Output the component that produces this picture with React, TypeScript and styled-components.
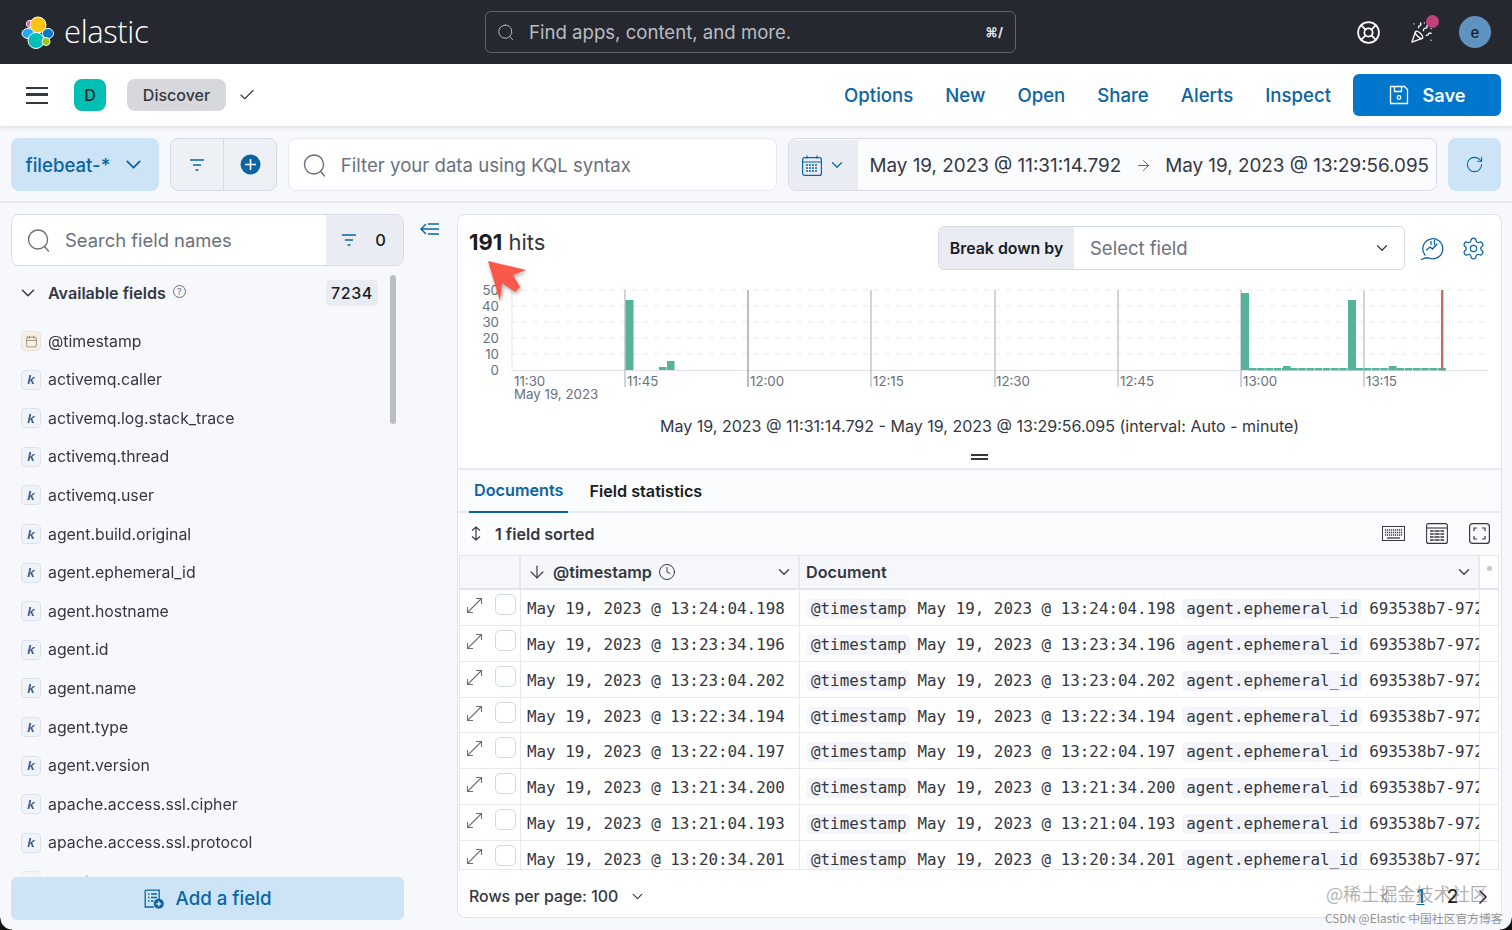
import React from 'react';
import styled, { createGlobalStyle } from 'styled-components';
import { LifeBuoy, PartyPopper, ChevronDown, ArrowRight, ArrowDown, Clock, Settings, RotateCw, Calendar, ChevronLeft, ChevronRight, Check } from 'lucide-react';

const Global = createGlobalStyle`
  html, body { margin: 0; padding: 0; background: #f6f8fc; overflow: hidden; }
  * { box-sizing: border-box; }
  body { font-family: Inter, "Noto Sans", sans-serif; color: #343741; }
`;

const Page = styled.div`
  position: relative; width: 1512px; height: 930px; overflow: hidden;
  display: flex; flex-direction: column; background: #f6f8fc;
`;
const TopBar = styled.header`
  height: 64px; flex: none; background: #25282f; display: flex; align-items: center; padding: 0 21px 0 21px; position: relative;
`;
const Brand = styled.div`
  display: flex; align-items: center; gap: 10px; width: 464px;
  font-family: "Open Sans", sans-serif; font-weight: 300; font-size: 31px; letter-spacing: -0.4px; color: #fff;
  span { margin-top: -3px; }
`;
const GlobalSearch = styled.div`
  width: 531px; height: 42px; border: 1px solid #60646c; border-radius: 6px; display: flex; align-items: center;
  padding: 0 12px 0 11px; gap: 14px; color: #b9bcc2; font-size: 18.6px;
`;
const Shortcut = styled.span` margin-left: auto; font-size: 13px; font-weight: 700; color: #e3e5e8; `;
const TopRight = styled.div` margin-left: auto; display: flex; align-items: center; color: #fff; gap: 29px; `;
const Notified = styled.span`
  position: relative; display: flex;
  &::after { content: ""; position: absolute; width: 13px; height: 13px; border-radius: 50%; background: #c0407c; top: -6px; right: -6px; }
`;
const Avatar = styled.div`
  width: 32px; height: 32px; border-radius: 50%; background: #6092c0; color: #1a1c21; font-size: 15px; font-weight: 500;
  display: flex; align-items: center; justify-content: center; margin-left: -3px;
`;

const SubBar = styled.div`
  height: 62px; flex: none; background: #fff; display: flex; align-items: center; padding: 0 11px 0 26px;
  box-shadow: 0 1px 5px rgba(60,70,90,.18); position: relative; z-index: 2;
`;
const Burger = styled.div`
  width: 22px; height: 17px; border-top: 2.5px solid #343741; border-bottom: 2.5px solid #343741; position: relative; margin-right: 26px;
  &::after { content: ""; position: absolute; left: 0; right: 0; top: 4.7px; height: 2.5px; background: #343741; }
`;
const AppBadge = styled.div`
  width: 32px; height: 32px; border-radius: 8px; background: #00bfb3; color: #1a1c21; font-size: 16px; font-weight: 500;
  display: flex; align-items: center; justify-content: center; margin-right: 21px;
`;
const Crumb = styled.div`
  width: 99px; height: 32px; border-radius: 8px; background: #d6d8db; color: #343741; font-size: 16px; font-weight: 500;
  display: flex; align-items: center; justify-content: center; margin-right: 12px;
`;
const NavLinks = styled.nav` margin-left: auto; display: flex; align-items: center; gap: 32px; color: #0b64a4; font-size: 18.6px; font-weight: 500; `;
const SaveButton = styled.button`
  width: 148px; height: 42px; border: 0; border-radius: 6px; background: #0077cc; color: #fff; font: 600 18.2px Inter, sans-serif;
  display: flex; align-items: center; justify-content: center; gap: 13px; margin-left: 22px; padding: 0 0 0 1px;
`;

const FilterBar = styled.div`
  height: 77px; flex: none; display: flex; gap: 11px; padding: 12px 11px 10px; border-bottom: 2px solid #e6e9f0;
`;
const DataView = styled.div`
  width: 148px; border-radius: 8px; background: #cce4f5; color: #0b64a4; font-size: 18.6px; font-weight: 500;
  display: flex; align-items: center; justify-content: center; gap: 11px; padding-left: 2px;
`;
const FilterGroup = styled.div`
  width: 107px; display: grid; grid-template-columns: 1fr 1fr; border: 1px solid #d6dce6; border-radius: 8px; background: #edf0f5; overflow: hidden;
`;
const GroupCell = styled.div`
  display: flex; align-items: center; justify-content: center;
  & + & { border-left: 1px solid #d6dce6; }
`;
const KqlInput = styled.div`
  width: 490px; background: #fff; border: 1px solid #e6e9f0; border-radius: 8px; display: flex; align-items: center;
  padding-left: 13px; gap: 13px; font-size: 18.6px; color: #6a717d;
`;
const DateBox = styled.div`
  width: 649px; background: #fbfcfe; border: 1px solid #d8dde7; border-radius: 8px; display: flex; align-items: center; overflow: hidden;
  font-size: 18.85px; color: #343741; white-space: nowrap; padding-top: 1px;
`;
const DateIcon = styled.div`
  width: 69px; height: 100%; flex: none; background: #e9edf3; display: flex; align-items: center; justify-content: center; gap: 6px; color: #0b64a4;
`;
const DateText = styled.span` margin-left: 11px; `;
const DateArrow = styled.span` display: flex; margin: 0 13px 0 14px; color: #343741; `;
const RefreshButton = styled.div`
  width: 53px; border-radius: 8px; background: #cce4f5; color: #0b64a4; display: flex; align-items: center; justify-content: center;
`;

const Main = styled.div` flex: 1; display: flex; min-height: 0; `;
const Sidebar = styled.aside`
  width: 393px; margin-left: 11px; padding-top: 11px; display: flex; flex-direction: column; position: relative; height: 717px;
`;
const FieldSearch = styled.div`
  height: 52px; flex: none; border: 1px solid #d6dce6; border-radius: 8px; background: #fff; display: flex; align-items: center; overflow: hidden;
  font-size: 18.4px; color: #6a717d;
`;
const FieldSearchInput = styled.div` flex: 1; display: flex; align-items: center; gap: 13px; padding-left: 14px; `;
const FieldFilter = styled.div`
  width: 77px; height: 100%; background: #e9edf3; display: flex; align-items: center; justify-content: space-between; padding: 0 17px 0 15px;
  color: #1a1c21; font-size: 16.5px; font-weight: 500;
`;
const AvailableRow = styled.div`
  height: 54px; flex: none; display: flex; align-items: center; padding-left: 6px; color: #343741; font-size: 16.1px; font-weight: 600;
`;
const AvailableLabel = styled.span` margin-left: 9px; `;
const HelpIcon = styled.span`
  width: 13px; height: 13px; border: 1px solid #69707d; border-radius: 50%; color: #69707d; font-size: 9px; font-weight: 400;
  display: flex; align-items: center; justify-content: center; margin: -3px 0 0 7px;
`;
const CountBadge = styled.span`
  margin-left: auto; margin-right: 26px; width: 52px; height: 26px; border-radius: 4px; background: #e9edf3; color: #1a1c21;
  font: 500 16px Inter, sans-serif; letter-spacing: .6px; display: flex; align-items: center; justify-content: center;
`;
const FieldList = styled.div`
  flex: 1; min-height: 0; overflow: hidden; margin-top: 1.8px;
  mask-image: linear-gradient(to bottom, #000 calc(100% - 8px), rgba(0,0,0,.25));
`;
const FieldRow = styled.div`
  height: 38.6px; display: flex; align-items: center; gap: 7px; padding-left: 10px; font-size: 15.85px; color: #343741;
`;
const Token = styled.span`
  width: 20px; height: 20px; border-radius: 4px; border: 1px solid #dce2ec; background: #f0f4fa; color: #3f5f8f;
  font: italic 700 13.5px "Liberation Sans", sans-serif; display: flex; align-items: center; justify-content: center; flex: none;
`;
const DateToken = styled(Token)`
  background: #f6efe6; border-color: #ece3d8; color: #8f7a5f;
`;
const Scroll = styled.div`
  position: absolute; left: 379px; top: 72px; width: 6px; height: 149px; border-radius: 3px; background: #b9bdc4;
`;
const AddField = styled.button`
  height: 43px; flex: none; border: 0; border-radius: 6px; background: #cce4f5; color: #0b64a4; font: 500 18.7px Inter, sans-serif;
  display: flex; align-items: center; justify-content: center; gap: 12px; padding-bottom: 1px;
`;
const CollapseCol = styled.div` width: 53px; padding: 17px 0 0 16px; color: #0b64a4; `;

const Panel = styled.section`
  width: 1045px; height: 704px; margin-top: 11px; background: #fff; border: 1px solid #dfe3ea; border-radius: 8px;
  display: flex; flex-direction: column; overflow: hidden;
`;
const ChartArea = styled.div` height: 255px; flex: none; border-bottom: 2px solid #e6e9f0; display: flex; flex-direction: column; `;
const ChartHead = styled.div` height: 44px; margin-top: 11px; display: flex; align-items: flex-start; padding: 0 15px 0 11px; flex: none; `;
const Hits = styled.div` font-size: 22px; line-height: 32px; color: #343741; b { font-weight: 700; color: #1a1c21; } `;
const Breakdown = styled.div`
  margin-left: auto; width: 467px; height: 44px; border: 1px solid #d6dce6; border-radius: 6px; display: flex; overflow: hidden; font-size: 18.5px; color: #6a717d;
`;
const BreakLabel = styled.div`
  width: 135px; background: #e9edf3; color: #1a1c21; font-size: 15.9px; font-weight: 600; display: flex; align-items: center; justify-content: center;
`;
const BreakValue = styled.div` flex: 1; display: flex; align-items: center; justify-content: space-between; padding: 0 13px 0 16px; `;
const HeadIcons = styled.div` display: flex; align-items: center; height: 44px; gap: 17px; margin-left: 15px; color: #0b64a4; `;
const ChartSvg = styled.svg` display: block; flex: none; margin-top: 10px; `;
const Caption = styled.div` text-align: center; font-size: 16.05px; line-height: 24px; color: #343741; margin-top: 4px; `;
const Handle = styled.div` width: 17px; height: 6px; border-top: 2px solid #343741; border-bottom: 2px solid #343741; margin: 16px auto 0; `;
const Tabs = styled.div` height: 43px; flex: none; display: flex; gap: 16px; padding-left: 11px; border-bottom: 2px solid #e6e9f0; font-size: 16.2px; font-weight: 600; color: #1a1c21; background: #fbfcfe; `;
const Tab = styled.div<{ $active?: boolean }>`
  padding: 0 5px 1px; height: 43px; display: flex; align-items: center;
  ${p => p.$active ? 'color: #0b64a4; border-bottom: 2px solid #0b64a4;' : ''}
`;
const Toolbar = styled.div`
  height: 42px; flex: none; display: flex; align-items: center; padding: 0 11px 1px 12px; gap: 13px; font-size: 16.1px; font-weight: 600; color: #343741; background: #fbfcfe;
`;
const ToolIcons = styled.div` margin-left: auto; display: flex; gap: 21px; align-items: center; color: #343741; `;
const GridTable = styled.div` flex: 1; min-height: 0; overflow: hidden; margin: 0 2px 0 1px; border: 1px solid #e0e4ec; border-bottom: 0; `;
const Cols = styled.div` display: grid; grid-template-columns: 61px 279px 680px 1fr; `;
const HeadRow = styled(Cols)` height: 34px; background: #f5f7fb; border-bottom: 2px solid #e0e4ec; font-size: 16.2px; font-weight: 600; color: #343741; `;
const HeadCell = styled.div`
  display: flex; align-items: center; padding: 0 0 0 6px; gap: 6px; border-right: 2px solid #e6e9f0;
  &:last-child { border-right: 0; background: #fff; }
`;
const HeadEnd = styled.span` margin-left: auto; display: flex; padding-right: 5px; `;
const Dot = styled.span` width: 5px; height: 5px; border-radius: 50%; background: #c3c7cd; margin: -8px 0 0 1px; `;
const Row = styled(Cols)`
  height: 35.85px; border-bottom: 1px solid #e6e9f0; font: 400 15.87px/1 "DejaVu Sans Mono", "Liberation Mono", monospace; color: #343741;
`;
const CtlCell = styled.div` display: flex; align-items: flex-start; padding: 4px 0 0 6px; gap: 12px; border-right: 1px solid #e6e9f0; color: #69707d; `;
const Checkbox = styled.span` width: 21px; height: 21px; border: 1px solid #d3d8e0; border-radius: 5px; background: #fff; flex: none; `;
const IconNudge = styled.span` display: flex; margin-top: 3px; `;
const TimeCell = styled.div` display: flex; align-items: center; padding: 3px 0 0 6px; border-right: 1px solid #e6e9f0; white-space: nowrap; `;
const DocCell = styled.div` display: flex; align-items: center; padding: 3px 0 0 7px; overflow: hidden; white-space: nowrap; border-right: 1px solid #e6e9f0; `;
const Dt = styled.span` background: #f3f5fa; border-radius: 4px; padding: 2px 4px; margin: 0 7px 0 0; `;
const Dd = styled.span` margin-right: 7px; `;
const EndCell = styled.div` background: #fff; `;
const Footer = styled.div`
  height: 48px; flex: none; display: flex; align-items: center; padding: 6px 6px 0 11px; font-size: 15.9px; font-weight: 500; color: #343741; border-top: 1px solid #e6e9f0;
`;
const RowsLabel = styled.span` display: flex; align-items: center; gap: 11px; `;
const Pager = styled.div` margin-left: auto; display: flex; align-items: center; gap: 17px; font-size: 19px; font-weight: 500; color: #1a1c21; `;
const PageNo = styled.span<{ $active?: boolean }>`
  width: 15px; text-align: center;
  ${p => p.$active ? 'color: #0b64a4; text-decoration: underline;' : ''}
`;
const PagerNext = styled.span` display: flex; margin-left: -6px; `;
const Pointer = styled.svg` position: absolute; left: 480px; top: 255px; pointer-events: none; filter: drop-shadow(1px 2px 2px rgba(0,0,0,.35)); `;
const Watermark = styled.div`
  position: absolute; left: 1326px; top: 881px; font: 400 18.1px "Noto Sans CJK SC", "Noto Sans", sans-serif; color: rgba(110,110,110,.55); line-height: 24px; white-space: nowrap; pointer-events: none;
`;
const Watermark2 = styled.div`
  position: absolute; left: 1325px; top: 910px; font: 400 11.8px "Noto Sans CJK SC", "Liberation Sans", sans-serif; color: rgba(110,110,110,.75); line-height: 16px; white-space: nowrap; pointer-events: none;
`;
const Corner = styled.div<{ $right?: boolean }>`
  position: absolute; bottom: 0; ${p => (p.$right ? 'right: 0;' : 'left: 0;')} width: 12px; height: 12px;
  background: ${p => (p.$right ? 'radial-gradient(circle at 0 0, transparent 11px, #111 12px)' : 'radial-gradient(circle at 100% 0, transparent 11px, #111 12px)')};
`;

const SearchIcon = ({ size = 26 }: { size?: number }) => (
  <svg width={size} height={size} viewBox="0 0 26 26" fill="none" stroke="currentColor" strokeWidth="1.4" strokeLinecap="round">
    <path d="M12 3a9.5 9.5 0 1 0 0 19 9.5 9.5 0 0 0 6-2.2 9.5 9.5 0 0 0-6-16.8z" /><path d="M18.5 19.5l4 4.5" />
  </svg>
);
const FilterIcon = () => (
  <svg width="16" height="14" viewBox="0 0 16 14" fill="none" stroke="#0b64a4" strokeWidth="1.6"><path d="M1 2h14M4 7h8M6.5 12h3" /></svg>
);
const Logo = () => (
  <svg width="33" height="33" viewBox="0 0 33 33">
    <g stroke="#fff" strokeWidth="1">
      <circle cx="9" cy="8" r="3.6" fill="#f04e98" />
      <circle cx="17" cy="9" r="8" fill="#fec514" />
      <ellipse cx="7" cy="17.5" rx="6" ry="5" fill="#1ba9f5" />
      <ellipse cx="27" cy="17.5" rx="5.5" ry="5" fill="#0077cc" />
      <circle cx="15" cy="24.5" r="8" fill="#00bfb3" />
      <circle cx="25" cy="25.5" r="4" fill="#93c90e" />
    </g>
  </svg>
);
const SaveIcon = () => (
  <svg width="20" height="20" viewBox="0 0 20 20" fill="none" stroke="#fff" strokeWidth="1.3">
    <path d="M1.5 1.5h14l3 3v14h-17z" /><path d="M5.5 1.5v5h7v-5" /><circle cx="10" cy="12.5" r="1.8" />
  </svg>
);
const CalendarIcon = () => (
  <svg width="20" height="21" viewBox="0 0 20 21" fill="none" stroke="#0b64a4" strokeWidth="1.2">
    <rect x=".6" y="2.6" width="18.8" height="17.8" rx="2" /><path d="M1 7h18M5 .5v3M15 .5v3" />
    <path d="M4 10h12M4 13h12M4 16h12" strokeWidth="1.6" strokeDasharray="2 1" />
  </svg>
);
const ExpandIcon = () => (
  <svg width="17" height="17" viewBox="0 0 17 17" fill="none" stroke="currentColor" strokeWidth="1.1"><path d="M2 15L15 2M10 1.5h5.5V7M1.5 10v5.5H7" /></svg>
);
const SortIcon = () => (
  <svg width="12" height="15" viewBox="0 0 12 15" fill="none" stroke="#343741" strokeWidth="1.2"><path d="M6 1v13M2 4.5L6 1l4 3.5M2 10.5L6 14l4-3.5" /></svg>
);
const KeyboardIcon = () => (
  <svg width="23" height="15" viewBox="0 0 23 15" fill="none" stroke="#343741" strokeWidth="1"><rect x=".5" y=".5" width="22" height="14" />
    <path d="M3 4h17M3 6.5h17M3 9h17" strokeDasharray="1.2 .8" strokeWidth="1.4" /><path d="M5 12h13" strokeWidth="1.3" /></svg>
);
const TableIcon = () => (
  <svg width="22" height="21" viewBox="0 0 22 21" fill="none" stroke="#343741" strokeWidth="1.1"><rect x=".6" y=".6" width="20.8" height="19.8" rx="2" /><path d="M1 5h20" />
    <path d="M4 8h14M4 11h14M4 14h14M4 17h14" strokeWidth="1.5" /><path d="M8 6.5v12M14 6.5v12" stroke="#fff" strokeWidth=".8" /></svg>
);
const FullIcon = () => (
  <svg width="21" height="21" viewBox="0 0 21 21" fill="none" stroke="#343741" strokeWidth="1.2"><rect x=".6" y=".6" width="19.8" height="19.8" rx="3" /><path d="M5 8V5h3M13 5h3v3M16 13v3h-3M8 16H5v-3" /></svg>
);
const AssistIcon = () => (
  <svg width="24" height="24" viewBox="0 0 24 24" fill="none" stroke="#0b64a4" strokeWidth="1.3" strokeLinecap="round">
    <path d="M5 19A10 10 0 1 1 9 22h-4l-3.5 1.5" /><path d="M6.5 14l3.5-3 2.5 2 4.5-5" /><path d="M11 5.5v3M14.5 4.5v4" />
  </svg>
);
const AddFieldIcon = () => (
  <svg width="20" height="20" viewBox="0 0 20 20" fill="none"><path d="M1.2 1.2h14v9M10 18H1.2V1.2" stroke="#0b64a4" strokeWidth="1.3" />
    <path d="M4 5h1.5M7 5h6M4 8.5h1.5M7 8.5h6M4 12h1.5M7 12h2.5" stroke="#0b64a4" strokeWidth="1.3" /><circle cx="14.8" cy="14.8" r="5" fill="#0b64a4" /><path d="M14.8 12.3v5M12.3 14.8h5" stroke="#fff" strokeWidth="1.2" /></svg>
);
const CollapseIcon = () => (
  <svg width="20" height="14" viewBox="0 0 20 14" fill="none" stroke="currentColor" strokeWidth="1.4"><path d="M6 2L1 7l5 5M1 7h18M8 2h11M8 12h11" /></svg>
);

const fields = ['activemq.caller','activemq.log.stack_trace','activemq.thread','activemq.user','agent.build.original','agent.ephemeral_id','agent.hostname','agent.id','agent.name','agent.type','agent.version','apache.access.ssl.cipher','apache.access.ssl.protocol','apache.error.message'];
const times = ['13:24:04.198','13:23:34.196','13:23:04.202','13:22:34.194','13:22:04.197','13:21:34.200','13:21:04.193','13:20:34.201'];
const ticks = [625,748,871,995,1118,1241,1364];
const tickLabels: [number,string][] = [[514,'11:30'],[627,'11:45'],[750,'12:00'],[873,'12:15'],[996,'12:30'],[1120,'12:45'],[1243,'13:00'],[1366,'13:15']];
const gridY = [290,306,322,338,354];
const yLabels: [number,string][] = [[295,'50'],[311,'40'],[327,'30'],[343,'20'],[359,'10'],[375,'0']];
const stepBars: number[] = [];
for (let x = 1249; x < 1440; x += 8.2) stepBars.push(x);

const Chart = () => (
  <ChartSvg width="1043" height="130" viewBox="458 280 1043 130">
    {gridY.map(y => <line key={y} x1="511" x2="1486" y1={y} y2={y} stroke="#e6e9ef" strokeDasharray="5 6" />)}
    <line x1="512" x2="512" y1="290" y2="371" stroke="#e3e6ec" />
    <line x1="512" x2="1488" y1="370.5" y2="370.5" stroke="#dfe2e8" />
    {ticks.map(x => <line key={x} x1={x} x2={x} y1="290" y2="387" stroke={x === 748 ? '#8c9097' : '#b4b7bd'} strokeWidth="1.2" />)}
    <rect x="625.5" y="300" width="8" height="70" fill="#54b399" />
    <rect x="659" y="367" width="7.5" height="3" fill="#54b399" />
    <rect x="667" y="361" width="7.5" height="9" fill="#54b399" />
    <rect x="1241" y="293" width="8" height="77" fill="#54b399" />
    <rect x="1348" y="300" width="8" height="70" fill="#54b399" />
    {stepBars.map(x => <rect key={x} x={x} y="368" width="7.6" height="2.4" fill="#54b399" />)}
    <rect x="1283" y="366" width="7.6" height="4" fill="#54b399" />
    <rect x="1389" y="366" width="7.6" height="4" fill="#54b399" />
    <rect x="1441" y="368" width="5" height="2.4" fill="#54b399" />
    <rect x="1441" y="290" width="2.4" height="80" fill="#cc6a62" />
    <g fontFamily="Inter, sans-serif" fontSize="13.3" fill="#69707d">
      {yLabels.map(([y, t]) => <text key={t} x="499" y={y} textAnchor="end">{t}</text>)}
      {tickLabels.map(([x, t]) => <text key={t} x={x} y="386">{t}</text>)}
      <text x="514" y="399">May 19, 2023</text>
    </g>
  </ChartSvg>
);

export default function App() {
  return (
    <Page>
      <Global />
      <TopBar>
        <Brand><Logo /><span>elastic</span></Brand>
        <GlobalSearch><SearchIcon size={18} /><span>Find apps, content, and more.</span><Shortcut>⌘/</Shortcut></GlobalSearch>
        <TopRight>
          <LifeBuoy size={25} strokeWidth={1.7} />
          <Notified><PartyPopper size={23} strokeWidth={1.4} /></Notified>
          <Avatar>e</Avatar>
        </TopRight>
      </TopBar>
      <SubBar>
        <Burger />
        <AppBadge>D</AppBadge>
        <Crumb>Discover</Crumb>
        <Check size={18} strokeWidth={1.5} color="#343741" />
        <NavLinks><span>Options</span><span>New</span><span>Open</span><span>Share</span><span>Alerts</span><span>Inspect</span></NavLinks>
        <SaveButton><SaveIcon />Save</SaveButton>
      </SubBar>
      <FilterBar>
        <DataView>filebeat-*<ChevronDown size={25} strokeWidth={1.7} /></DataView>
        <FilterGroup>
          <GroupCell><FilterIcon /></GroupCell>
          <GroupCell>
            <svg width="21" height="21" viewBox="0 0 21 21"><circle cx="10.5" cy="10.5" r="10" fill="#0b64a4" /><path d="M10.5 5v11M5 10.5h11" stroke="#fff" strokeWidth="1.6" /></svg>
          </GroupCell>
        </FilterGroup>
        <KqlInput><SearchIcon /><span>Filter your data using KQL syntax</span></KqlInput>
        <DateBox>
          <DateIcon><CalendarIcon /><ChevronDown size={18} strokeWidth={1.6} /></DateIcon>
          <DateText>May 19, 2023 @ 11:31:14.792</DateText>
          <DateArrow><ArrowRight size={17} strokeWidth={1.1} /></DateArrow>
          <span>May 19, 2023 @ 13:29:56.095</span>
        </DateBox>
        <RefreshButton><RotateCw size={19} strokeWidth={1.3} /></RefreshButton>
      </FilterBar>
      <Main>
        <Sidebar>
          <FieldSearch>
            <FieldSearchInput><SearchIcon /><span>Search field names</span></FieldSearchInput>
            <FieldFilter><FilterIcon /><span>0</span></FieldFilter>
          </FieldSearch>
          <AvailableRow>
            <ChevronDown size={22} strokeWidth={1.6} />
            <AvailableLabel>Available fields</AvailableLabel>
            <HelpIcon>?</HelpIcon>
            <CountBadge>7234</CountBadge>
          </AvailableRow>
          <FieldList>
            <FieldRow><DateToken><Calendar size={13} strokeWidth={1.4} /></DateToken>@timestamp</FieldRow>
            {fields.map(f => <FieldRow key={f}><Token>k</Token>{f}</FieldRow>)}
          </FieldList>
          <AddField><AddFieldIcon />Add a field</AddField>
          <Scroll />
        </Sidebar>
        <CollapseCol><CollapseIcon /></CollapseCol>
        <Panel>
          <ChartArea>
            <ChartHead>
              <Hits><b>191</b> hits</Hits>
              <Breakdown>
                <BreakLabel>Break down by</BreakLabel>
                <BreakValue><span>Select field</span><ChevronDown size={18} strokeWidth={1.6} color="#343741" /></BreakValue>
              </Breakdown>
              <HeadIcons><AssistIcon /><Settings size={25} strokeWidth={1.2} /></HeadIcons>
            </ChartHead>
            <Chart />
            <Caption>May 19, 2023 @ 11:31:14.792 - May 19, 2023 @ 13:29:56.095 (interval: Auto - minute)</Caption>
            <Handle />
          </ChartArea>
          <Tabs><Tab $active>Documents</Tab><Tab>Field statistics</Tab></Tabs>
          <Toolbar>
            <SortIcon />1 field sorted
            <ToolIcons><KeyboardIcon /><TableIcon /><FullIcon /></ToolIcons>
          </Toolbar>
          <GridTable>
            <HeadRow>
              <HeadCell />
              <HeadCell>
                <ArrowDown size={20} strokeWidth={1.4} />@timestamp<Clock size={18} strokeWidth={1.3} />
                <HeadEnd><ChevronDown size={18} strokeWidth={1.6} /></HeadEnd>
              </HeadCell>
              <HeadCell>Document<HeadEnd><ChevronDown size={18} strokeWidth={1.6} /></HeadEnd></HeadCell>
              <HeadCell><Dot /></HeadCell>
            </HeadRow>
            {times.map(t => (
              <Row key={t}>
                <CtlCell><IconNudge><ExpandIcon /></IconNudge><Checkbox /></CtlCell>
                <TimeCell>May 19, 2023 @ {t}</TimeCell>
                <DocCell>
                  <Dt>@timestamp</Dt><Dd>May 19, 2023 @ {t}</Dd>
                  <Dt>agent.ephemeral_id</Dt><Dd>693538b7-9727-4a1d-b0c5-7e1d</Dd>
                </DocCell>
                <EndCell />
              </Row>
            ))}
          </GridTable>
          <Footer>
            <RowsLabel>Rows per page: 100<ChevronDown size={17} strokeWidth={1.6} /></RowsLabel>
            <Pager>
              <ChevronLeft size={22} strokeWidth={1.3} color="#98a2b3" />
              <PageNo $active>1</PageNo>
              <PageNo>2</PageNo>
              <PagerNext><ChevronRight size={24} strokeWidth={1.5} /></PagerNext>
            </Pager>
          </Footer>
        </Panel>
      </Main>
      <Pointer width="50" height="50" viewBox="480 255 50 50">
        <path d="M488 261l38 9-13 5 7 12-5 5-13-9-2 18z" fill="#f9584a" />
      </Pointer>
      <Watermark>@稀土掘金技术社区</Watermark>
      <Watermark2>CSDN @Elastic 中国社区官方博客</Watermark2>
      <Corner />
      <Corner $right />
    </Page>
  );
}
